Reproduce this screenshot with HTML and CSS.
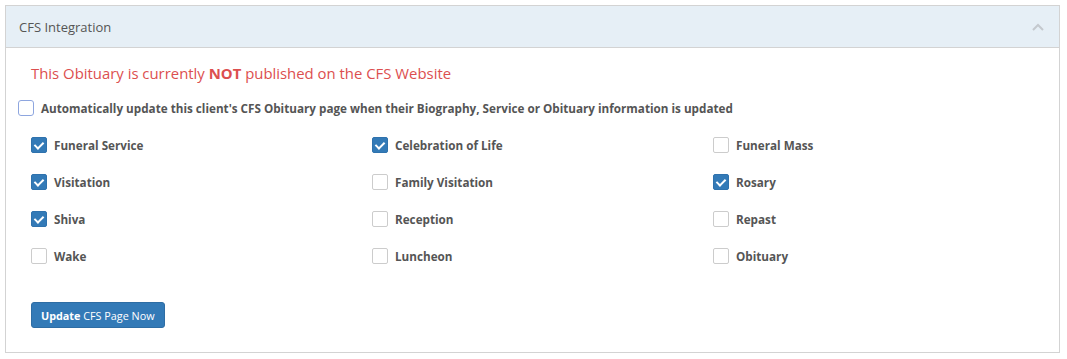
FILE: index.html
```html
<!DOCTYPE html>
<html lang="en">
<head>
    <meta charset="UTF-8">
    <title>CFS Integration</title>
    <link rel="stylesheet" href="styles.css">
</head>
<body>
    <div class="panel">
        <div class="panel-heading">
            <span class="panel-title">CFS Integration</span>
            <svg class="chevron" width="12" height="8" viewBox="0 0 12 8">
                <polyline points="1,7 6,2 11,7" fill="none" stroke="#c4c9ce" stroke-width="2"/>
            </svg>
        </div>
        <div class="panel-body">
            <p class="status">This Obituary is currently <b>NOT</b> published on the CFS Website</p>

            <label class="auto-row">
                <span class="box box-auto"></span>
                Automatically update this client's CFS Obituary page when their Biography, Service or Obituary information is updated
            </label>

            <div class="event-grid">
                <label class="event"><span class="box checked"></span>Funeral Service</label>
                <label class="event"><span class="box checked"></span>Celebration of Life</label>
                <label class="event"><span class="box"></span>Funeral Mass</label>
                <label class="event"><span class="box checked"></span>Visitation</label>
                <label class="event"><span class="box"></span>Family Visitation</label>
                <label class="event"><span class="box checked"></span>Rosary</label>
                <label class="event"><span class="box checked"></span>Shiva</label>
                <label class="event"><span class="box"></span>Reception</label>
                <label class="event"><span class="box"></span>Repast</label>
                <label class="event"><span class="box"></span>Wake</label>
                <label class="event"><span class="box"></span>Luncheon</label>
                <label class="event"><span class="box"></span>Obituary</label>
            </div>

            <button class="btn btn-primary"><b>Update</b> CFS Page Now</button>
        </div>
    </div>
</body>
</html>
```

FILE: styles.css
```css
body {
    font-family: "Open Sans", Arial, sans-serif;
    margin: 0;
    padding: 5px;
    background: #fff;
    color: #555;
}
.panel {
    width: 1055px;
    box-sizing: border-box;
    border: 1px solid #d3d3d3;
}
.panel-heading {
    height: 42px;
    box-sizing: border-box;
    background: #e6eff6;
    border-bottom: 1px solid #d3d3d3;
    padding: 0 13px;
    display: flex;
    align-items: center;
    justify-content: space-between;
}
.panel-title {
    font-size: 13px;
    color: #555;
}
.chevron {
    margin-right: 2px;
    margin-top: 1px;
}
.panel-body {
    padding: 15px 25px 24px 25px;
}
.status {
    margin: 0;
    font-size: 14.9px;
    line-height: 20px;
    color: #dc4f4f;
}
.status b {
    font-weight: 700;
}
.auto-row {
    display: flex;
    align-items: center;
    gap: 7px;
    margin: 15px 0 0 -13px;
    height: 20px;
    font-size: 11.7px;
    font-weight: 700;
    color: #555;
}
.box {
    width: 14px;
    height: 14px;
    border: 1px solid #ccc;
    border-radius: 2px;
    background: #fff;
    flex-shrink: 0;
    position: relative;
}
.box-auto {
    width: 14px;
    height: 14px;
    border: 1px solid #8ea6df;
    border-radius: 3px;
}
.box.checked {
    background: #337ab7;
    border-color: #2f72ad;
}
.box.checked::after {
    content: "";
    position: absolute;
    left: 4px;
    top: 2px;
    width: 4px;
    height: 7px;
    border: solid #fff;
    border-width: 0 2px 2px 0;
    transform: rotate(45deg);
}
.event-grid {
    display: grid;
    grid-template-columns: repeat(3, 341px);
    grid-auto-rows: 37px;
    margin-top: 8px;
}
.event {
    display: flex;
    align-items: center;
    gap: 7px;
    font-size: 11.7px;
    font-weight: 700;
    color: #555;
}
.btn {
    font-family: "Open Sans", Arial, sans-serif;
    font-size: 10.8px;
    color: #fff;
    border-radius: 3px;
    cursor: pointer;
    height: 26px;
    padding: 0 9px;
    margin-top: 28px;
}
.btn-primary {
    background: #337ab7;
    border: 1px solid #2e6da4;
}
```
